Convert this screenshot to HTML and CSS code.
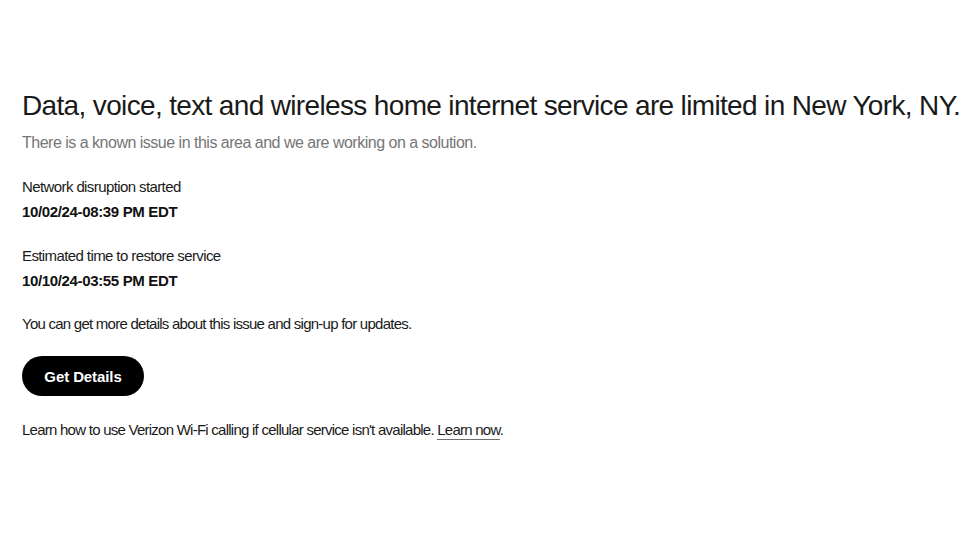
FILE: index.html
```html
<!DOCTYPE html>
<html lang="en">
<head>
<meta charset="utf-8">
<title>Service status</title>
<link rel="stylesheet" href="styles.css">
</head>
<body>
<main class="page">
  <h1 class="title">Data, voice, text and wireless home internet service are limited in New York, NY.</h1>
  <p class="subtitle">There is a known issue in this area and we are working on a solution.</p>
  <div class="info">
    <div class="label">Network disruption started</div>
    <div class="value">10/02/24-08:39 PM EDT</div>
  </div>
  <div class="info">
    <div class="label">Estimated time to restore service</div>
    <div class="value">10/10/24-03:55 PM EDT</div>
  </div>
  <p class="text">You can get more details about this issue and sign-up for updates.</p>
  <a class="button" href="#">Get Details</a>
  <p class="text">Learn how to use Verizon Wi-Fi calling if cellular service isn't available. <a class="link" href="#">Learn now</a>.</p>
</main>
</body>
</html>
```
FILE: styles.css
```css
html, body {
  margin: 0;
  padding: 0;
  background: #ffffff;
}
body {
  font-family: "Liberation Sans", Arial, sans-serif;
  color: #000000;
}
.page {
  padding: 86px 22px 0 22px;
  display: flex;
  flex-direction: column;
  align-items: flex-start;
}
.title {
  margin: 0;
  font-size: 28px;
  font-weight: 400;
  letter-spacing: -0.65px;
  line-height: 40px;
  color: #1a1a1a;
  white-space: nowrap;
}
.subtitle {
  margin: 6px 0 0 0;
  font-size: 16px;
  line-height: 22px;
  letter-spacing: -0.5px;
  color: #767676;
}
.info {
  margin-top: 23px;
  display: flex;
  flex-direction: column;
  gap: 5px;
}
.info + .info {
  margin-top: 24px;
}
.label {
  font-size: 15px;
  line-height: 20px;
  letter-spacing: -0.6px;
  color: #1a1a1a;
}
.value {
  font-size: 15px;
  line-height: 20px;
  letter-spacing: -0.35px;
  font-weight: 700;
  color: #111111;
}
.text {
  margin: 23px 0 0 0;
  font-size: 15px;
  line-height: 20px;
  letter-spacing: -0.75px;
  color: #1a1a1a;
}
.button {
  margin-top: 22px;
  display: inline-flex;
  align-items: center;
  justify-content: center;
  width: 122px;
  height: 40px;
  border-radius: 20px;
  background: #000000;
  color: #ffffff;
  font-size: 15px;
  font-weight: 700;
  text-decoration: none;
  letter-spacing: -0.1px;
}
.button + .text {
  margin-top: 24px;
}
.link {
  color: #1a1a1a;
  text-decoration: none;
  border-bottom: 1px solid #6f6f6f;
  padding-bottom: 1px;
}
```
